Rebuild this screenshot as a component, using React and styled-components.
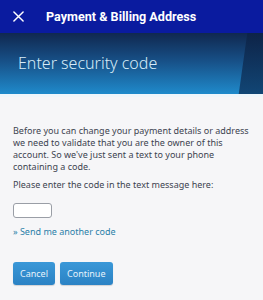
import React from 'react';
import styled, { createGlobalStyle } from 'styled-components';

const GlobalStyle = createGlobalStyle`
  html, body {
    margin: 0;
    padding: 0;
    background: #f6f6f8;
  }
  * { box-sizing: border-box; }
`;

const Page = styled.div`
  width: 263px;
  height: 300px;
  overflow: hidden;
  background: #f6f6f8;
  font-family: 'Noto Sans', 'Open Sans', sans-serif;
`;

const TopBar = styled.header`
  height: 33px;
  background: #0a1b9f;
  display: flex;
  align-items: center;
  padding-left: 13px;
  gap: 22px;
`;

const CloseIcon = styled.svg`
  width: 11px;
  height: 11px;
  flex-shrink: 0;
`;

const BarTitle = styled.h1`
  margin: 0;
  font-family: Roboto, 'Liberation Sans', sans-serif;
  font-weight: 700;
  font-size: 12.6px;
  color: #ffffff;
`;

const Banner = styled.div`
  position: relative;
  height: 64px;
  background: linear-gradient(180deg, #10284f 0%, #174f86 45%, #1f8acb 100%);
  display: flex;
  align-items: center;
  padding-left: 18px;
  overflow: hidden;
  border-bottom: 3px solid #eef6fb;
`;

const BannerShade = styled.div`
  position: absolute;
  top: 0;
  right: -20px;
  width: 40px;
  height: 100%;
  background: linear-gradient(180deg, #0d2346 0%, #0f3a66 100%);
  transform: skewX(-8deg);
  opacity: 0.85;
`;

const BannerTitle = styled.h2`
  margin: 0 0 2px;
  font-weight: 300;
  font-size: 16px;
  color: #d6ecf8;
`;

const Content = styled.main`
  padding: 28px 6px 0 13px;
  color: #3d4450;
`;

const Text = styled.p`
  margin: 0 0 ${(p) => p.$gap || 0}px;
  font-size: 9px;
  line-height: 12px;
  white-space: nowrap;
`;

const CodeInput = styled.input`
  display: block;
  width: 39px;
  height: 15px;
  margin: 0 0 7px;
  border: 1px solid #9a9ea6;
  border-radius: 3px;
  background: #ffffff;
`;

const ResendLink = styled.a`
  display: block;
  font-size: 9px;
  color: #2a7fa8;
  text-decoration: none;
  margin-bottom: 24px;
`;

const Actions = styled.div`
  display: flex;
  gap: 5px;
`;

const Button = styled.button`
  height: 23px;
  padding: 0 7px;
  border: none;
  border-radius: 3px;
  background: linear-gradient(180deg, #3a98d8 0%, #2b82c4 100%);
  color: #e6f2fb;
  font-family: 'Noto Sans', 'Open Sans', sans-serif;
  font-size: 9px;
  box-shadow: 0 1px 1px rgba(0, 0, 0, 0.15);
`;

export default function App() {
  return (
    <Page>
      <GlobalStyle />
      <TopBar>
        <CloseIcon viewBox="0 0 12 12">
          <path d="M1 1 L11 11 M11 1 L1 11" stroke="#fff" strokeWidth="1.6" strokeLinecap="round" />
        </CloseIcon>
        <BarTitle>Payment &amp; Billing Address</BarTitle>
      </TopBar>
      <Banner>
        <BannerTitle>Enter security code</BannerTitle>
        <BannerShade />
      </Banner>
      <Content>
        <Text $gap={6}>
          Before you can change your payment details or address
          <br />
          we need to validate that you are the owner of this
          <br />
          account. So we've just sent a text to your phone
          <br />
          containing a code.
        </Text>
        <Text $gap={12}>Please enter the code in the text message here:</Text>
        <CodeInput type="text" />
        <ResendLink href="#">» Send me another code</ResendLink>
        <Actions>
          <Button>Cancel</Button>
          <Button>Continue</Button>
        </Actions>
      </Content>
    </Page>
  );
}
